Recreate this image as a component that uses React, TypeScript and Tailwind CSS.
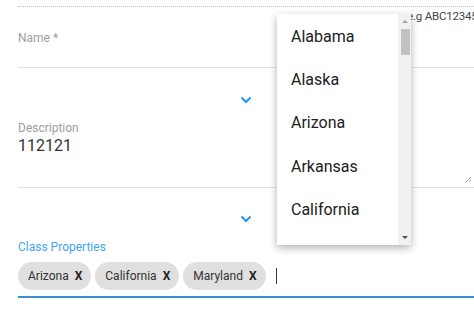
const states = ['Alabama', 'Alaska', 'Arizona', 'Arkansas', 'California'];
const chips = ['Arizona', 'California', 'Maryland'];

function Chevron() {
  return (
    <div className="flex justify-center">
      <svg width="12" height="8" viewBox="0 0 12 8" fill="none">
        <path d="M1.5 1.5 L6 6 L10.5 1.5" stroke="#2196f3" strokeWidth="2" />
      </svg>
    </div>
  );
}

export default function App() {
  return (
    <div className="relative h-[323px] w-[474px] overflow-hidden bg-white font-['Roboto',sans-serif]">
      <div className="pl-[18px]">
        {/* Code field (disabled) */}
        <div className="h-[7px] border-b border-dotted border-[#c4c4c4]" />
        <div className="mt-[2px] overflow-hidden whitespace-nowrap pl-[389px] text-[11.5px] leading-[14px] tracking-[-0.2px] text-[#444]">
          e.g ABC12345
        </div>

        {/* Name */}
        <div className="mt-[8px] text-[12px] leading-[14px] text-[#9e9e9e]">Name *</div>
        <div className="mt-[22px] h-[1px] bg-[#e2e2e2]" />
        <div className="mt-[28px]">
          <Chevron />
        </div>

        {/* Description */}
        <div className="mt-[17px] text-[12px] leading-[14px] text-[#9e9e9e]">Description</div>
        <div className="mt-[1px] text-[16px] leading-[20px] text-[#333]">112121</div>
        <div className="flex h-[31px] items-end justify-end pr-[2px] pb-[4px]">
          <svg width="7" height="7" viewBox="0 0 7 7" stroke="#9e9e9e" strokeWidth="1">
            <path d="M1 6 L6 1 M4 6 L6 4" />
          </svg>
        </div>
        <div className="h-[1px] bg-[#e2e2e2]" />
        <div className="mt-[27px]">
          <Chevron />
        </div>

        {/* Class Properties */}
        <div className="mt-[17px] text-[12px] leading-[14px] text-[#42a5f5]">Class Properties</div>
        <div className="mt-[8px] flex items-center gap-[4px]">
          {chips.map((c) => (
            <div
              key={c}
              className="flex h-[28px] items-center gap-[6px] rounded-full bg-[#e0e0e0] pl-[10px] pr-[9px] text-[12px] text-[#333]"
            >
              <span>{c}</span>
              <span className="font-bold text-[#222]">X</span>
            </div>
          ))}
          <div className="ml-[6px] h-[16px] w-[1px] bg-[#333]" />
        </div>
        <div className="mt-[6px] h-[2px] bg-[#3b8fd4]" />
      </div>

      {/* Dropdown menu */}
      <div className="absolute left-[277px] top-[14px] h-[231px] w-[134px] overflow-hidden bg-white pt-[1px] shadow-[0_3px_8px_rgba(0,0,0,0.3)]">
        {states.map((s) => (
          <div key={s} className="flex h-[43.4px] items-center pl-[14px] text-[16px] text-[#212121]">
            {s}
          </div>
        ))}
        <div className="absolute right-0 top-0 bottom-0 w-[13px] bg-[#f1f1f1]">
          <div className="mx-auto mt-[6px] h-0 w-0 border-x-[3px] border-b-[3px] border-x-transparent border-b-[#a3a3a3]" />
          <div className="ml-[3px] mr-[1px] mt-[6px] h-[26px] bg-[#c1c1c1]" />
          <div className="absolute bottom-[6px] left-1/2 h-0 w-0 -translate-x-1/2 border-x-[3px] border-t-[3px] border-x-transparent border-t-[#505050]" />
        </div>
      </div>
    </div>
  );
}
